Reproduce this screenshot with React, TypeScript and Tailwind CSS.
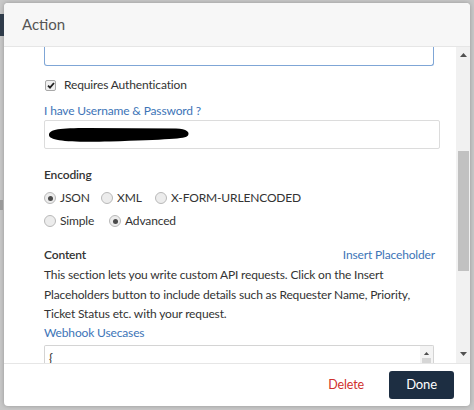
import React from "react";

function Radio({ checked }: { checked?: boolean }) {
  return (
    <span className="flex h-[12px] w-[12px] shrink-0 items-center justify-center rounded-full border border-[#b9b9b9] bg-[#ececec]">
      {checked && <span className="h-[5px] w-[5px] rounded-full bg-[#4a4a4a]" />}
    </span>
  );
}

function Option({ label, checked, w }: { label: string; checked?: boolean; w: string }) {
  return (
    <label className={`flex items-center gap-[4px] ${w}`}>
      <Radio checked={checked} />
      <span className="whitespace-nowrap">{label}</span>
    </label>
  );
}

function Arrow({ up }: { up?: boolean }) {
  return (
    <svg width="7" height="4" viewBox="0 0 7 4" className="fill-[#505050]">
      {up ? <path d="M0 4 L3.5 0 L7 4 Z" /> : <path d="M0 0 L3.5 4 L7 0 Z" />}
    </svg>
  );
}

export default function App() {
  return (
    <div className="relative h-[410px] w-[474px] overflow-hidden bg-[#c8c8c8] font-['Lato',sans-serif] text-[12px] tracking-[-0.15px] text-[#333]">
      {/* page behind the overlay */}
      <div className="absolute left-0 top-[14px] h-[22px] w-[4px] bg-[#2f3b4a]" />
      <div className="absolute left-0 top-[200px] h-[10px] w-[3px] bg-[#9a9a9a]" />

      <div className="ml-[4px] mt-[3px] flex h-[403px] w-[466px] flex-col overflow-hidden rounded-[4px] bg-white shadow-[0_0_4px_rgba(0,0,0,0.25)]">
        {/* Header */}
        <div className="flex h-[44px] shrink-0 items-center border-b border-[#e6e6e6] bg-[#f7f7f7] pl-[18px] text-[15px] tracking-normal text-[#555]">
          Action
        </div>

        {/* Body */}
        <div className="flex min-h-0 flex-1">
          <div className="min-w-0 flex-1 overflow-hidden pl-[40px] pr-[16px]">
            <div className="mr-[6px] h-[19px] rounded-b-[3px] border-x border-b border-[#7fa6d6]" />

            <label className="mt-[10px] flex h-[18px] items-center gap-[8px]">
              <span className="ml-[1px] flex h-[11px] w-[11px] items-center justify-center rounded-[2px] border border-[#a8a8a8] bg-[#f0f0f0]">
                <svg width="8" height="7" viewBox="0 0 8 7">
                  <path d="M1 3.6 L3 5.6 L7 1" fill="none" stroke="#222" strokeWidth="1.8" />
                </svg>
              </span>
              <span>Requires Authentication</span>
            </label>

            <div className="mt-[8px] h-[18px] leading-[18px] text-[#3d74b7]">I have Username &amp; Password ?</div>

            <div className="flex h-[29px] items-center rounded-[2px] border border-[#dcdcdc] pl-[3px]">
              <svg width="142" height="17" viewBox="0 0 142 17">
                <path d="M1 9 C1 3 12 2 40 2 L128 2.5 C139 3 142 6 140 9.5 C138 13 118 13.5 62 15.5 C22 16.5 1 15 1 9 Z" fill="#000" />
              </svg>
            </div>

            <div className="mt-[17px] h-[18px] leading-[18px] font-semibold text-[#333]">Encoding</div>

            <div className="mt-[5px] flex h-[18px] items-center">
              <Option label="JSON" checked w="w-[57px]" />
              <Option label="XML" w="w-[54px]" />
              <Option label="X-FORM-URLENCODED" w="w-[150px]" />
            </div>
            <div className="mt-[5px] flex h-[18px] items-center">
              <Option label="Simple" w="w-[65px]" />
              <Option label="Advanced" checked w="w-[100px]" />
            </div>

            <div className="mt-[16px] flex h-[18px] items-center justify-between pr-[5px]">
              <span className="font-semibold">Content</span>
              <span className="text-[#3d74b7]">Insert Placeholder</span>
            </div>

            <p className="mt-[1px] whitespace-nowrap leading-[19.5px]">
              This section lets you write custom API requests. Click on the Insert
              <br />
              Placeholders button to include details such as Requester Name, Priority,
              <br />
              Ticket Status etc. with your request.
            </p>
            <div className="h-[17px] leading-[17px] text-[#3d74b7]">Webhook Usecases</div>

            <div className="mr-[6px] mt-[4px] flex h-[30px] rounded-t-[2px] border-x border-t border-[#d4d4d4]">
              <span className="flex-1 pl-[4px] pt-[4px] text-[13px]">{"{"}</span>
              <div className="flex w-[13px] flex-col items-center bg-[#f4f4f4] pt-[6px]">
                <Arrow up />
                <span className="mt-[3px] h-[20px] w-[9px] bg-[#d6d6d6]" />
              </div>
            </div>
          </div>

          {/* Scrollbar */}
          <div className="flex w-[14px] shrink-0 flex-col items-center bg-[#f1f1f1]">
            <div className="flex h-[14px] items-center pt-[2px]">
              <Arrow up />
            </div>
            <div className="mt-[90px] h-[120px] w-[11px] bg-[#c1c1c1]" />
            <div className="flex-1" />
            <div className="flex h-[14px] items-center pb-[4px]">
              <Arrow />
            </div>
          </div>
        </div>

        {/* Footer */}
        <div className="flex h-[43px] shrink-0 items-center justify-end gap-[25px] border-t border-[#e6e6e6] pr-[16px]">
          <span className="text-[12.5px] text-[#d0312d]">Delete</span>
          <button className="h-[28px] w-[65px] rounded-[3px] bg-[#1d2e42] text-[13px] text-white">Done</button>
        </div>
      </div>
    </div>
  );
}
